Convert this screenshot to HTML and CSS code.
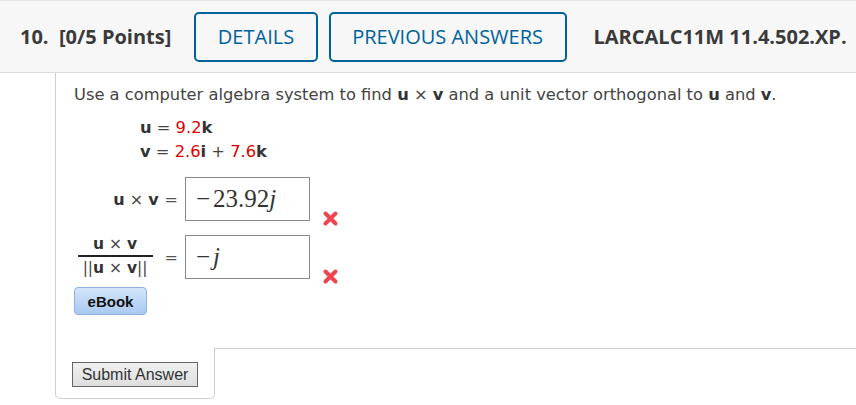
FILE: index.html
```html
<!DOCTYPE html>
<html>
<head>
<meta charset="utf-8">
<link rel="stylesheet" href="styles.css">
</head>
<body>
<div class="header">
  <div class="qnum">10.&nbsp;&nbsp;[0/5 Points]</div>
  <div class="btn">DETAILS</div>
  <div class="btn">PREVIOUS ANSWERS</div>
  <div class="qcode">LARCALC11M 11.4.502.XP.</div>
</div>
<div class="content">
  <p class="prompt">Use a computer algebra system to find <b>u</b> × <b>v</b> and a unit vector orthogonal to <b>u</b> and <b>v</b>.</p>
  <div class="given">
    <div><b>u</b> = <span class="red">9.2</span><b>k</b></div>
    <div><b>v</b> = <span class="red">2.6</span><b>i</b> + <span class="red">7.6</span><b>k</b></div>
  </div>
  <div class="answers">
    <div class="arow">
      <div class="label"><span class="lbl"><b>u</b> × <b>v</b></span><span class="eq">=</span></div>
      <div class="box"><span class="minus">−</span>23.92<i>j</i></div>
      <svg class="xmark" width="17" height="17" viewBox="0 0 17 17"><path d="M3.5 3.5 L13.5 13.5 M13.5 3.5 L3.5 13.5" stroke="#f0444f" stroke-width="4" stroke-linecap="round"/></svg>
    </div>
    <div class="arow row2">
      <div class="label">
        <span class="frac">
          <span class="num"><b>u</b> × <b>v</b></span>
          <span class="den">||<b>u</b> × <b>v</b>||</span>
        </span>
        <span class="eq">=</span>
      </div>
      <div class="box"><span class="minus">−</span><i>j</i></div>
      <svg class="xmark" width="17" height="17" viewBox="0 0 17 17"><path d="M3.5 3.5 L13.5 13.5 M13.5 3.5 L3.5 13.5" stroke="#f0444f" stroke-width="4" stroke-linecap="round"/></svg>
    </div>
  </div>
  <div class="ebook">eBook</div>
</div>
<div class="footer">
  <div class="fleft"><div class="submit">Submit Answer</div></div>
  <div class="fright"></div>
</div>
</body>
</html>
```

FILE: styles.css
```css
html, body {
  margin: 0;
  padding: 0;
  background: #fff;
}
body {
  width: 856px;
  height: 405px;
  overflow: hidden;
}
.header {
  box-sizing: border-box;
  height: 73px;
  background: #f7f7f7;
  border-top: 1px solid #e6e6e6;
  border-bottom: 1px solid #dcdcdc;
  display: flex;
  align-items: center;
  padding-left: 20px;
  font-family: "Open Sans", sans-serif;
  color: #3a3a3a;
}
.qnum {
  font-weight: 700;
  font-size: 20px;
  margin-right: 23px;
}
.btn {
  box-sizing: border-box;
  height: 50px;
  border: 2px solid #00629b;
  border-radius: 5px;
  color: #00629b;
  font-size: 20px;
  font-weight: 500;
  display: flex;
  align-items: center;
  padding: 0 21.5px;
  margin-right: 11px;
  background: #f7f7f7;
}
.qcode {
  font-weight: 700;
  font-size: 20px;
  margin-left: 16px;
}
.content {
  margin-left: 55px;
  border-left: 1px solid #cfcfcf;
  height: 275px;
  box-sizing: border-box;
  padding: 12px 0 0 18px;
  font-family: "DejaVu Sans", Verdana, sans-serif;
  font-size: 16.3px;
  color: #444;
}
.content b {
  color: #333;
}
.prompt {
  margin: 0;
  line-height: 20px;
}
.given {
  margin: 11px 0 0 66px;
  line-height: 24px;
}
.red {
  color: #dd0000;
}
.answers {
  margin-top: 13px;
}
.arow {
  display: flex;
  align-items: flex-start;
}
.row2 {
  margin-top: 14px;
}
.label {
  width: 104px;
  display: flex;
  justify-content: flex-end;
  align-items: center;
  height: 44px;
  margin-right: 7px;
  font-size: 16px;
}
.lbl {
  margin-right: 6px;
}
.eq {
  color: #555;
}
.frac {
  display: flex;
  flex-direction: column;
  align-items: center;
  width: 75px;
  margin-right: 12px;
  font-size: 15.5px;
}
.num {
  border-bottom: 2px solid #222;
  width: 100%;
  text-align: center;
  padding-bottom: 2px;
  line-height: 18px;
}
.den {
  line-height: 22px;
}
.box {
  box-sizing: border-box;
  width: 125px;
  height: 44px;
  border: 1px solid #8a8a8a;
  padding: 0 0 0 10px;
  font-family: "Liberation Serif", "DejaVu Serif", serif;
  font-size: 25px;
  line-height: 42px;
  color: #333;
}
.minus {
  margin-right: 3px;
}
.xmark {
  margin-left: 12px;
  margin-top: 33px;
  margin-bottom: -10px;
}
.ebook {
  box-sizing: border-box;
  width: 73px;
  height: 28px;
  margin-top: 8px;
  border: 1px solid #8db2e2;
  border-radius: 4px;
  background: linear-gradient(#d4e5fa, #a9c9f0);
  font-family: "Liberation Sans", Arial, sans-serif;
  font-weight: 700;
  font-size: 15px;
  color: #111;
  display: flex;
  align-items: center;
  justify-content: center;
}
.footer {
  display: flex;
  margin-left: 55px;
  height: 50px;
}
.fleft {
  box-sizing: border-box;
  width: 160px;
  height: 51px;
  border-left: 1px solid #cfcfcf;
  border-right: 1px solid #cfcfcf;
  border-bottom: 1px solid #cfcfcf;
  border-radius: 0 0 5px 5px;
  padding: 14px 0 0 16px;
}
.fright {
  flex: 1;
  border-top: 1px solid #cfcfcf;
  margin-left: -1px;
}
.submit {
  box-sizing: border-box;
  width: 126px;
  height: 25px;
  border: 1px solid #666;
  background: linear-gradient(#f0f0f0, #dedede);
  font-family: "Liberation Sans", Arial, sans-serif;
  font-size: 16px;
  color: #333;
  display: flex;
  align-items: center;
  justify-content: center;
}
```
